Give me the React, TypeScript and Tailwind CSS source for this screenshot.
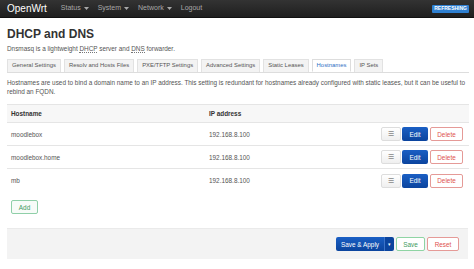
import React from 'react';

const rows = [
  { host: 'moodlebox', ip: '192.168.8.100' },
  { host: 'moodlebox.home', ip: '192.168.8.100' },
  { host: 'mb', ip: '192.168.8.100' },
];

const tabs = ['General Settings', 'Resolv and Hosts Files', 'PXE/TFTP Settings', 'Advanced Settings', 'Static Leases', 'Hostnames', 'IP Sets'];

function Caret() {
  return (
    <svg width="5" height="3" viewBox="0 0 5 3" className="ml-[3px] inline-block">
      <path d="M0 0h5L2.5 3z" fill="currentColor" />
    </svg>
  );
}

export default function App() {
  return (
    <div className="w-[474px] h-[269px] overflow-hidden bg-white text-[#404040]" style={{ fontFamily: '"Liberation Sans", Arial, sans-serif' }}>
      {/* top bar */}
      <div className="h-[18px] flex items-center px-[7px] bg-gradient-to-b from-[#333] to-[#1f1f1f] border-b border-[#111]">
        <span className="text-white text-[10px] leading-none">OpenWrt</span>
        <nav className="flex items-center gap-[9px] ml-[14px] text-[7px] text-[#a8a8a8]">
          <span className="flex items-center">Status<Caret /></span>
          <span className="flex items-center">System<Caret /></span>
          <span className="flex items-center">Network<Caret /></span>
          <span>Logout</span>
        </nav>
        <span className="ml-auto mr-[-2px] bg-[#2f80d1] text-white text-[5px] font-bold leading-none px-[2px] py-[1.5px] rounded-[1px]">REFRESHING</span>
      </div>

      <div className="pl-[7px] pr-[5px]">
        <h2 className="text-[12px] font-bold leading-none mt-[10px] text-[#333]">DHCP and DNS</h2>
        <p className="text-[6.4px] leading-none mt-[6px] text-[#555]">
          Dnsmasq is a lightweight <span className="border-b border-dotted border-[#777]">DHCP</span> server and{' '}
          <span className="border-b border-dotted border-[#777]">DNS</span> forwarder.
        </p>

        {/* tabs */}
        <div className="flex gap-[3px] mt-[7px] border-b border-[#ddd] text-[5.9px] leading-none">
          {tabs.map((t) => (
            <span
              key={t}
              className={
                t === 'Hostnames'
                  ? 'h-[13px] px-[4px] flex items-center bg-white border border-[#ddd] border-b-white -mb-px text-[#2e6fc4]'
                  : 'h-[13px] px-[4px] flex items-center bg-[#f3f3f3] border border-[#e2e2e2] border-b-0 text-[#555]'
              }
            >
              {t}
            </span>
          ))}
        </div>

        <p className="text-[6.4px] leading-[8.5px] mt-[6px] text-[#555]">
          Hostnames are used to bind a domain name to an IP address. This setting is redundant for hostnames already configured with static leases, but it can be useful to
          <br />
          rebind an FQDN.
        </p>

        {/* table */}
        <div className="mt-[8px] text-[6.4px] text-[#555]">
          <div className="flex items-center h-[19px] bg-[#f7f7f7] border-t border-b border-[#e5e5e5] font-bold text-[#333]">
            <span className="w-[202px] pl-[4px]">Hostname</span>
            <span>IP address</span>
          </div>
          {rows.map((r, i) => (
            <div key={r.host} className={'flex items-center h-[23px] ' + (i < rows.length - 1 ? 'border-b border-[#e5e5e5]' : '')}>
              <span className="w-[202px] pl-[4px]">{r.host}</span>
              <span>{r.ip}</span>
              <div className="ml-auto mr-[6px] flex gap-[1px]">
                <span className="w-[20px] h-[14px] flex items-center justify-center border border-[#ddd] rounded-[2px] bg-gradient-to-b from-white to-[#efefef] text-[#888] text-[7px]">☰</span>
                <span className="w-[26px] h-[14px] flex items-center justify-center rounded-[2px] bg-gradient-to-b from-[#1a5fc4] to-[#0b449e] text-white">Edit</span>
                <span className="w-[33px] h-[14px] flex items-center justify-center ml-[1px] border border-[#e59a97] rounded-[2px] bg-white text-[#e0534e]">Delete</span>
              </div>
            </div>
          ))}
        </div>

        <div className="mt-[8px] ml-[4px] flex">
          <span className="inline-flex w-[27px] h-[14px] items-center justify-center border border-[#8fcfa8] rounded-[2px] bg-[#f7fbf8] text-[#3e9a5e] text-[6.4px]">Add</span>
        </div>

        {/* footer actions */}
        <div className="mt-[14px] h-[31px] mr-[1px] bg-[#f3f3f3] border-t border-[#eaeaea] flex items-center justify-end pr-[9px] gap-[2px] text-[6.4px]">
          <div className="flex h-[14px] rounded-[2px] overflow-hidden">
            <span className="w-[48px] flex items-center justify-center bg-gradient-to-b from-[#1a5fc4] to-[#0b449e] text-white">Save &amp; Apply</span>
            <span className="w-[10px] flex items-center justify-center bg-[#0b449e] border-l border-[#3b73c8] text-white text-[5px]">▾</span>
          </div>
          <span className="w-[29px] h-[14px] flex items-center justify-center border border-[#8fd4a4] rounded-[2px] bg-white text-[#3e9a5e]">Save</span>
          <span className="w-[32px] h-[14px] flex items-center justify-center border border-[#e59a97] rounded-[2px] bg-white text-[#e0534e]">Reset</span>
        </div>
      </div>
    </div>
  );
}
